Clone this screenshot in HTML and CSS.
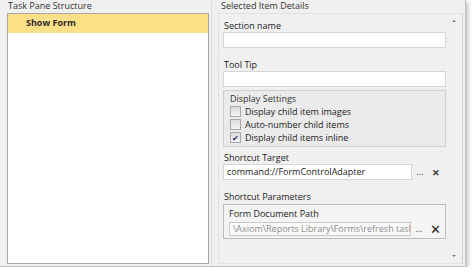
FILE: index.html
```html
<!DOCTYPE html>
<html lang="en">
<head>
    <meta charset="UTF-8">
    <title>Task Pane Editor</title>
    <link rel="stylesheet" href="styles.css">
</head>
<body>
    <div class="window">
        <div class="pane left">
            <div class="pane-title">Task Pane Structure</div>
            <div class="tree">
                <div class="node selected">Show Form</div>
            </div>
        </div>
        <div class="pane right">
            <div class="pane-title">Selected Item Details</div>
            <div class="details">
                <div class="fields">
                    <div class="label first">Section name</div>
                    <div class="input"></div>

                    <div class="label">Tool Tip</div>
                    <div class="input"></div>

                    <div class="group">
                        <div class="group-title">Display Settings</div>
                        <div class="check"><span class="box"></span>Display child item images</div>
                        <div class="check"><span class="box"></span>Auto-number child items</div>
                        <div class="check"><span class="box checked">&#10004;</span>Display child items inline</div>
                    </div>

                    <div class="label">Shortcut Target</div>
                    <div class="row">
                        <div class="input text">command://FormControlAdapter</div>
                        <span class="dots">...</span>
                        <span class="clear">&#10005;</span>
                    </div>

                    <div class="label">Shortcut Parameters</div>
                    <div class="params">
                        <div class="param-name">Form Document Path</div>
                        <div class="row">
                            <div class="input text disabled">\Axiom\Reports Library\Forms\refresh task pane</div>
                            <span class="dots">...</span>
                            <span class="clear big">&#10005;</span>
                        </div>
                    </div>
                </div>
                <div class="scrollbar">
                    <span class="arrow up"></span>
                    <span class="arrow down"></span>
                </div>
            </div>
        </div>
    </div>
</body>
</html>
```

FILE: styles.css
```css
body { margin: 0; background: #fff; font-family: "Open Sans", sans-serif; font-size: 9px; color: #222; }
.window { display: flex; width: 465px; height: 266px; background: #f0f0f0; border-right: 1px solid #c4c4c4; border-bottom: 1px solid #c4c4c4; box-shadow: 2px 2px 4px rgba(0, 0, 0, 0.25); }
.pane { display: flex; flex-direction: column; }
.pane-title { height: 13px; line-height: 12px; color: #333; }
.left { width: 212px; flex: none; padding-left: 7px; box-sizing: border-box; border-right: 1px solid #dcdcdc; }
.left .pane-title { padding-left: 1px; }
.tree { width: 200px; height: 249px; background: #fff; border: 1px solid #a9a9a9; }
.node { height: 19px; line-height: 18px; padding-left: 18px; font-weight: bold; color: #2a2a2a; }
.node.selected { background: #fddf88; }
.right { flex: 1; min-width: 0; padding-left: 6px; }
.right .pane-title { padding-left: 3px; }
.details { display: flex; width: 243px; height: 249px; border: 1px solid #e2e2e2; border-right-color: #cfcfcf; }
.fields { flex: 1; min-width: 0; padding: 0 0 0 4px; }
.label { margin-top: 10px; height: 13px; line-height: 13px; padding-left: 1px; }
.label.first { margin-top: 5px; }
.input { height: 14px; background: #fff; border: 1px solid #d6d6d6; }
.input.text { flex: 1; min-width: 0; line-height: 14px; padding-left: 3px; white-space: nowrap; overflow: hidden; }
.input.disabled { color: #8a8a8a; border-color: #c9c9c9; background: #fafafa; }
.group { margin-top: 3px; padding: 2px 0 2px 6px; height: 51px; border: 1px solid #d0d0d0; background: #ebebeb; }
.group-title { height: 12px; line-height: 12px; color: #333; }
.check { display: flex; align-items: center; height: 13px; line-height: 13px; }
.box { width: 9px; height: 9px; margin-right: 4px; border: 1px solid #a8a8a8; background: linear-gradient(#dcdcdc, #f4f4f4); font-size: 8px; line-height: 9px; text-align: center; color: #1c2a6e; }
.group + .label { margin-top: 4px; }
.row { display: flex; align-items: center; }
.dots { width: 16px; flex: none; text-align: center; color: #444; line-height: 8px; }
.clear { width: 16px; flex: none; text-align: center; font-size: 9px; color: #333; font-weight: bold; }
.clear.big { font-size: 13px; font-weight: normal; color: #222; }
.row .clear { margin-right: 2px; }
.params { height: 33px; margin-top: 1px; padding-left: 5px; border: 1px solid #bcbcbc; background: #f4f4f4; }
.param-name { height: 14px; line-height: 15px; margin-top: 1px; }
.params .input { height: 12px; line-height: 12px; }
.scrollbar { width: 16px; flex: none; display: flex; flex-direction: column; justify-content: space-between; align-items: center; padding: 6px 0 6px; }
.arrow { width: 0; height: 0; border-left: 2px solid transparent; border-right: 2px solid transparent; }
.arrow.up { border-bottom: 2px solid #777; }
.arrow.down { border-top: 2px solid #777; }
```
